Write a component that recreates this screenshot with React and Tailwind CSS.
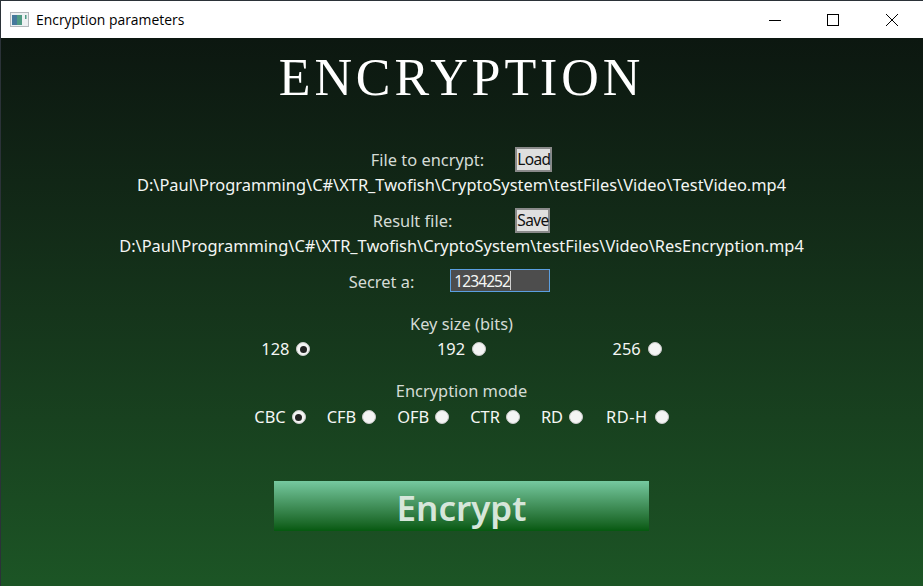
import React from "react";

function Radio({ checked }) {
  return (
    <span className="flex w-[14px] h-[14px] items-center justify-center rounded-full bg-[#f4f4f4] border border-[#c9c9c9]">
      {checked && <span className="w-[7px] h-[7px] rounded-full bg-[#222222]" />}
    </span>
  );
}

function Option({ label, checked, className = "gap-[7px]" }) {
  return (
    <label className={`flex items-center text-[#f4f6f4] ${className}`}>
      <span>{label}</span>
      <Radio checked={checked} />
    </label>
  );
}

function TitleBar() {
  return (
    <div className="flex h-[37px] items-center bg-white text-black">
      <svg width="20" height="18" viewBox="0 0 20 18" className="ml-[9px]">
        <rect x="0.5" y="1.5" width="18" height="14" fill="#eef0f2" stroke="#b4b8bc" />
        <rect x="2" y="4" width="10" height="10" fill="#4f9a83" />
        <rect x="2" y="4" width="5" height="10" fill="#46799c" />
        <rect x="15" y="4" width="1.5" height="4" fill="#4f9a83" />
      </svg>
      <span className="ml-[6px] text-[13.9px] font-['Open_Sans','Noto_Sans',sans-serif]">Encryption parameters</span>
      <div className="ml-auto flex h-full items-center">
        <div className="flex w-[46px] justify-center">
          <svg width="12" height="12" viewBox="0 0 12 12"><path d="M0 6.5h12" stroke="#000" /></svg>
        </div>
        <div className="ml-[12px] flex w-[46px] justify-center">
          <svg width="12" height="12" viewBox="0 0 12 12"><rect x="0.5" y="0.5" width="11" height="11" fill="none" stroke="#000" /></svg>
        </div>
        <div className="ml-[13px] mr-[8px] flex w-[46px] justify-center">
          <svg width="12" height="12" viewBox="0 0 12 12"><path d="M0 0l12 12M12 0L0 12" stroke="#000" /></svg>
        </div>
      </div>
    </div>
  );
}

export default function App() {
  return (
    <div className="flex h-[586px] w-[923px] flex-col overflow-hidden border-t border-l border-[#2b3238] font-['Noto_Sans','Open_Sans',sans-serif] text-[16.4px] leading-[22px]">
      <TitleBar />
      <main className="flex flex-1 flex-col items-center bg-gradient-to-b from-[#0c1710] to-[#1c5525] pr-[1px]">
        <h1 className="mt-[8px] h-[64px] text-[52px] leading-[64px] tracking-[3.9px] font-['Liberation_Serif',serif] font-normal text-white">
          ENCRYPTION
        </h1>

        <div className="mt-[37px] flex items-center gap-[31px]">
          <span className="text-[#d5dcd6]">File to encrypt:</span>
          <button className="h-[25px] w-[37px] border-2 border-[#8a8a8a] bg-[#dfdfdf] text-[15.5px] leading-none tracking-[-0.6px] text-[#111111]">Load</button>
        </div>
        <div className="mt-[2px] text-[#f4f6f4]">D:\Paul\Programming\C#\XTR_Twofish\CryptoSystem\testFiles\Video\TestVideo.mp4</div>

        <div className="mt-[12px] flex items-center gap-[63px]">
          <span className="text-[#d5dcd6]">Result file:</span>
          <button className="h-[25px] w-[35px] border-2 border-[#8a8a8a] bg-[#dfdfdf] text-[15.5px] leading-none tracking-[-0.6px] text-[#111111]">Save</button>
        </div>
        <div className="mt-[2px] text-[#f4f6f4]">D:\Paul\Programming\C#\XTR_Twofish\CryptoSystem\testFiles\Video\ResEncryption.mp4</div>

        <div className="mt-[12px] flex items-start gap-[36px] pr-[24px]">
          <span className="mt-[2px] text-[#d5dcd6]">Secret a:</span>
          <div className="flex h-[23px] w-[100px] items-center border border-[#5b9fe0] bg-[#4d4d4d] pl-[3px] text-[15.5px] tracking-[-0.9px] text-[#f4f6f4]">
            <span>1234252</span>
            <span className="h-[19px] w-[1px] bg-[#d0d0d0]" />
          </div>
        </div>

        <div className="mt-[20px] text-[#d5dcd6]">Key size (bits)</div>
        <div className="mt-[3px] flex gap-[126.5px]">
          <Option label="128" checked />
          <Option label="192" />
          <Option label="256" />
        </div>

        <div className="mt-[20px] text-[#d5dcd6]">Encryption mode</div>
        <div className="mt-[4px] flex gap-[21px]">
          <Option label="CBC" checked className="gap-[6px]" />
          <Option label="CFB" className="gap-[6px]" />
          <Option label="OFB" className="gap-[6px]" />
          <Option label="CTR" className="gap-[6px]" />
          <Option label="RD" className="gap-[6px]" />
          <Option label="RD-H" className="ml-[2px] gap-[7px] tracking-[0.5px]" />
        </div>

        <button className="mt-[53px] flex h-[50px] w-[375px] items-center justify-center bg-gradient-to-b from-[#76c9a0] to-[#05590f] pt-[4px] text-[35px] font-semibold leading-[46px] text-[#d6e6da]">
          Encrypt
        </button>
      </main>
    </div>
  );
}
